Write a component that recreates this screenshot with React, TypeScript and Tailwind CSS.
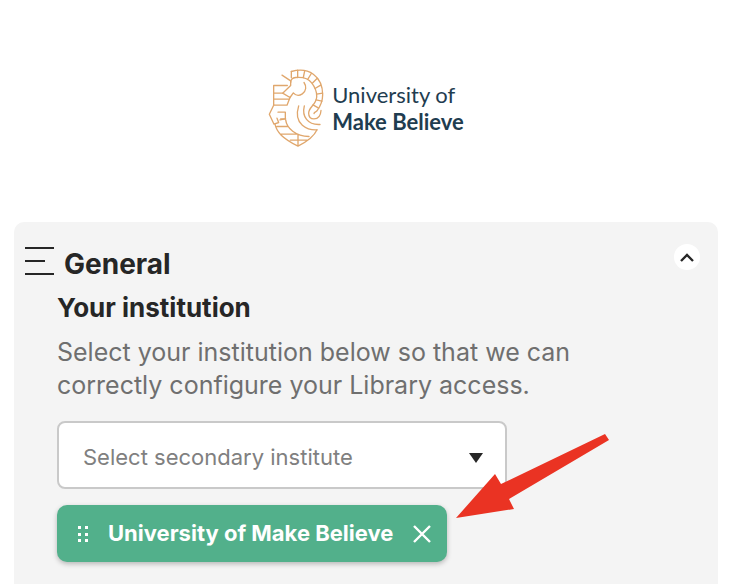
import { useState } from 'react';

const institutes = ['University of Make Believe'];

const Crest = () => (
  <svg viewBox="9 12 168 236" className="h-[79px] w-14" fill="none" stroke="#e0a76d" strokeWidth="4" strokeLinecap="round" strokeLinejoin="round" aria-hidden="true">
    {/* mane */}
    <path d="M79 19c24-7 48-5 66 8 18 13 28 36 28 62 0 22-8 36-17 48M77 52c0-9 5-14 15-15 22-2 37 1 48 16 11 14 16 27 15 43-2 24-24 29-24 48 0 11 7 17 16 17 12 0 20-10 21-25M156 137c-5 5-8 4-9 8" />
    <path d="M79 19v18M98 15v22M119 17l-4 20M139 25l-10 16M156 40l-14 14M167 60l-17 10M173 84l-18 3M171 108l-18-4M161 129l-17-10" />
    {/* head */}
    <path d="M51 30l26 17M77 47v14L53 84l22 13 10-14c7 8 18 9 27 3 12-8 13-23 5-34" />
    <path d="M67 61H26v59h40l9-23M26 84h27M26 102h47" />
    {/* hoof */}
    <path d="M26 120 13 147l14 30 14-5-5-13M39 141h22v20l-16 3" />
    {/* chest */}
    <path d="M101 122c-8 26-4 45 11 58 13 11 26 15 44 14M118 122c-8 32 10 58 47 56" />
    {/* shield */}
    <path d="M30 177c5 24 22 42 69 66 36-18 50-33 57-49M47 161h15M36 184h31M49 207h50v36M76 225h49M62 164c3 25 30 49 70 50" />
  </svg>
);

const Arrow = () => (
  <svg viewBox="0 0 153 84" className="pointer-events-none absolute bottom-11 left-[399px] h-[84px] w-[153px]" fill="#ea3323" aria-hidden="true">
    <path d="M0 84 39 40l6 10L149 0l4 6L53 65l5 10z" />
  </svg>
);

export default function App() {
  const [open, setOpen] = useState(true);
  const [selected, setSelected] = useState(institutes);

  return (
    <div className="flex min-h-screen flex-col bg-white px-3.5 font-['Inter',sans-serif] text-[#262626]">
      <header className="flex h-[222px] items-center justify-center gap-2 pb-1.5">
        <Crest />
        <p className="font-['Lato',sans-serif] text-[22px] leading-[27px] text-[#1f3d50]">
          University of
          <br />
          <strong className="font-bold">Make Believe</strong>
        </p>
      </header>

      <main className="flex-1 rounded-t-[10px] bg-[#f4f4f4] px-2.5 pt-[22px] pb-4">
        <div className="flex items-start justify-between pr-2">
          <div className="flex items-start gap-2.5">
            <svg viewBox="0 0 30 30" className="mt-0.5 h-[30px] w-[30px]" stroke="#262626" strokeWidth="2" aria-hidden="true">
              <path d="M1 2h29M1 15h20M1 28h29" />
            </svg>
            <h1 className="text-[28px] leading-10 font-bold">General</h1>
          </div>
          <button
            type="button"
            aria-label="Toggle General"
            aria-expanded={open}
            onClick={() => setOpen(!open)}
            className="flex h-[26px] w-[26px] items-center justify-center rounded-full bg-white"
          >
            <svg viewBox="0 0 14 9" className="h-[9px] w-3.5" fill="none" stroke="#262626" strokeWidth="2.400" aria-hidden="true">
              <path d="m1 8 6-6 6 6" />
            </svg>
          </button>
        </div>

        {open && (
          <section className="pl-[33px]">
            <h2 className="pt-1 text-[26px] leading-10 font-bold">Your institution</h2>
            <p className="mt-2 max-w-[540px] text-[25px] leading-[33px] text-[#6f6f6f]">
              Select your institution below so that we can correctly configure your Library access.
            </p>

            <div className="relative mt-[19px] max-w-[450px]">
              <select
                aria-label="Select secondary institute"
                className="h-[68px] w-full appearance-none rounded-lg border-2 border-[#c9c9c9] bg-white px-6 pt-1 text-[22px] text-[#808080]"
              >
                <option>Select secondary institute</option>
              </select>
              <svg viewBox="0 0 14 10" className="pointer-events-none absolute top-8 right-6 h-2.5 w-3.5" fill="#262626" aria-hidden="true">
                <path d="M0 0h14L7 10z" />
              </svg>
            </div>

            <div className="relative mt-4">
              {selected.map((name) => (
                <div key={name} className="flex h-[57px] w-fit items-center rounded-[10px] bg-[#52b08b] px-4 text-white shadow-[0_2px_5px_rgba(0,0,0,0.25)]">
                  <svg viewBox="0 0 20 16" className="h-4 w-5" fill="currentColor" aria-hidden="true">
                    <path d="M5 0h3v3H5zM12 0h3v3h-3zM5 7h3v3H5zM12 7h3v3h-3zM5 13h3v3H5zM12 13h3v3h-3z" />
                  </svg>
                  <span className="ml-[15px] text-[22px] font-bold">{name}</span>
                  <button
                    type="button"
                    aria-label={`Remove ${name}`}
                    onClick={() => setSelected(selected.filter((item) => item !== name))}
                    className="ml-5"
                  >
                    <svg viewBox="0 0 18 18" className="h-[18px] w-[18px]" stroke="currentColor" strokeWidth="2.400" aria-hidden="true">
                      <path d="m1 1 16 16M17 1 1 17" />
                    </svg>
                  </button>
                </div>
              ))}
              <Arrow />
            </div>
          </section>
        )}
      </main>
    </div>
  );
}
